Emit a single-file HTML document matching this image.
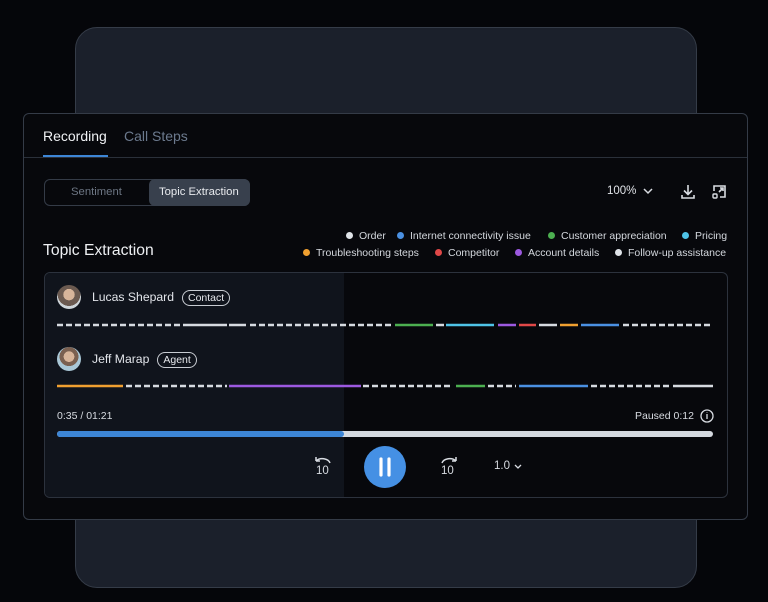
<!DOCTYPE html>
<html><head><meta charset="utf-8"><style>
*{margin:0;padding:0;box-sizing:border-box}
body{width:768px;height:602px;background:#05060a;font-family:"Liberation Sans",sans-serif;position:relative;overflow:hidden;color:#e6e8ec}
.back{position:absolute;left:75px;top:27px;width:622px;height:561px;background:#1b202b;border:1px solid #353c48;border-radius:22px}
.card{position:absolute;left:23px;top:113px;width:725px;height:407px;background:#07080c;border:1px solid #343b47;border-radius:6px}
.t{position:absolute;white-space:nowrap}
.dot{display:inline-block;width:7px;height:7px;border-radius:50%;margin-right:6px;vertical-align:0px}
.leg{font-size:10.5px;color:#d4d8de}
.box{position:absolute;left:44px;top:272px;width:684px;height:226px;border:1.5px solid #2c323d;border-radius:6px;background:#07080c;overflow:hidden}
.pill{display:inline-block;border:1.3px solid #c8ccd2;border-radius:9px;font-size:10.5px;padding:1px 5px;margin-left:8px;color:#e6e8ec}
.av{position:absolute;width:24px;height:24px;border-radius:50%;background:radial-gradient(circle at 50% 40%,#d8b59a 0 30%,#6b5a50 31% 60%,#cfd6da 61%)}
</style></head><body>
<div class="back"></div>
<div class="card"></div>
<div class="t" style="left:43px;top:128px;font-size:14px;color:#f0f2f5">Recording</div>
<div class="t" style="left:124px;top:128px;font-size:14px;color:#6c7a8e">Call Steps</div>
<div style="position:absolute;left:43px;top:155px;width:65px;height:3px;background:#3d86d6"></div>
<div style="position:absolute;left:24px;top:157px;width:723px;height:1px;background:#2a303a"></div>
<div style="position:absolute;left:44px;top:179px;width:206px;height:27px;border:1.3px solid #343b47;border-radius:6px"></div>
<div style="position:absolute;left:149px;top:179px;width:101px;height:27px;background:#38404d;border-radius:6px"></div>
<div class="t" style="left:71px;top:186px;font-size:11.3px;color:#6d7684">Sentiment</div>
<div class="t" style="left:159px;top:186px;font-size:11.3px;color:#e8eaee">Topic Extraction</div>
<div class="t" style="left:607px;top:185px;font-size:11.5px;color:#e0e3e8">100%</div>
<svg style="position:absolute;left:642px;top:186px" width="12" height="10"><path d="M2 3l4 4 4-4" stroke="#d8dce2" stroke-width="1.5" fill="none"/></svg>
<svg style="position:absolute;left:679px;top:183px" width="18" height="18"><path d="M9 2v9M5 7.5l4 4 4-4M3 12v3h12v-3" stroke="#d8dce2" stroke-width="1.6" fill="none"/></svg>
<svg style="position:absolute;left:710px;top:183px" width="18" height="18"><path d="M4 8V3h11v11h-5M9 9l4-4M10 5h3v3" stroke="#d8dce2" stroke-width="1.6" fill="none"/><rect x="3" y="11" width="4" height="4" rx="1" stroke="#d8dce2" stroke-width="1.4" fill="none"/></svg>
<div class="t" style="left:43px;top:242px;font-size:15.7px;color:#eef0f3">Topic Extraction</div>
<div class="t leg" style="left:346px;top:230px"><span class="dot" style="background:#dfe3e8"></span>Order</div>
<div class="t leg" style="left:397px;top:230px"><span class="dot" style="background:#4a90e2"></span>Internet connectivity issue</div>
<div class="t leg" style="left:548px;top:230px"><span class="dot" style="background:#4caf50"></span>Customer appreciation</div>
<div class="t leg" style="left:682px;top:230px"><span class="dot" style="background:#4fc3e8"></span>Pricing</div>
<div class="t leg" style="left:303px;top:247px"><span class="dot" style="background:#f0a030"></span>Troubleshooting steps</div>
<div class="t leg" style="left:435px;top:247px"><span class="dot" style="background:#e04848"></span>Competitor</div>
<div class="t leg" style="left:515px;top:247px"><span class="dot" style="background:#9c59e0"></span>Account details</div>
<div class="t leg" style="left:615px;top:247px"><span class="dot" style="background:#dfe3e8"></span>Follow-up assistance</div>
<div class="box"><div style="position:absolute;left:0;top:0;width:299px;height:226px;background:#10141c"></div></div>
<div class="av" style="left:57px;top:285px"></div>
<div class="t" style="left:92px;top:290px;font-size:12.2px;color:#e2e5ea">Lucas Shepard<span class="pill">Contact</span></div>
<div class="av" style="left:57px;top:347px;background:radial-gradient(circle at 50% 40%,#d8b59a 0 28%,#7a6050 29% 50%,#a9c7d6 51%)"></div>
<div class="t" style="left:92px;top:352px;font-size:12.2px;color:#e2e5ea">Jeff Marap<span class="pill">Agent</span></div>
<svg style="position:absolute;left:0;top:0" width="768" height="602">
<g stroke-width="2.5" fill="none">
<path d="M57 325H188M250 325H393M623 325H713M126 386H227M363 386H453M488 386H516M591 386H669" stroke="#d6dae0" stroke-dasharray="6 3"/>
<path d="M188 325H227M229 325H246M436 325H444M539 325H557M673 386H713" stroke="#d6dae0"/>
<path d="M395 325H433M456 386H485" stroke="#4caf50"/>
<path d="M446 325H494" stroke="#4fc3e8"/>
<path d="M498 325H516M229 386H361" stroke="#9c59e0"/>
<path d="M519 325H536" stroke="#e04848"/>
<path d="M560 325H578M57 386H123" stroke="#f0a030"/>
<path d="M581 325H619M519 386H588" stroke="#4a90e2"/>
</g>
<rect x="57" y="431" width="656" height="6" rx="3" fill="#d4d9e0"/>
<rect x="57" y="431" width="287" height="6" rx="3" fill="#3d86d6"/>
<circle cx="707" cy="416" r="6" stroke="#d8dce2" stroke-width="1.3" fill="none"/>
<path d="M707 414v5M707 412v.5" stroke="#d8dce2" stroke-width="1.3"/>
<circle cx="385" cy="467" r="21" fill="#4590e4"/>
<path d="M381 459v16M389 459v16" stroke="#fff" stroke-width="3.2" stroke-linecap="round"/>
<path d="M316 461a8 6 0 0 1 14 2M316 461l0-4M316 461l4 0" stroke="#d8dce2" stroke-width="1.5" fill="none"/>
<path d="M456 461a8 6 0 0 0-14 2M456 461l0-4M456 461l-4 0" stroke="#d8dce2" stroke-width="1.5" fill="none"/>
<path d="M515 465l3 3 3-3" stroke="#d8dce2" stroke-width="1.3" fill="none"/>
</svg>
<div class="t" style="left:316px;top:465px;font-size:11.5px;color:#d8dce2">10</div>
<div class="t" style="left:441px;top:465px;font-size:11.5px;color:#d8dce2">10</div>
<div class="t" style="left:494px;top:460px;font-size:11.5px;color:#d8dce2">1.0</div>
<div class="t" style="left:57px;top:410px;font-size:10.5px;color:#d8dce2">0:35 / 01:21</div>
<div class="t" style="left:635px;top:410px;font-size:10.5px;color:#d8dce2">Paused 0:12</div>
</body></html>
